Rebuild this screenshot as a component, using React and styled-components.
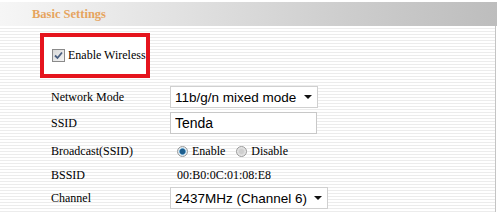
import styled, { createGlobalStyle } from "styled-components";

const GlobalStyle = createGlobalStyle`
  html, body {
    margin: 0;
    padding: 0;
    background: #fff;
  }
  body {
    font-family: "Liberation Serif", "Times New Roman", serif;
    font-size: 12px;
    color: #000;
  }
`;

const rows = [
  { label: "Network Mode", height: 26 },
  { label: "SSID", height: 26 },
  { label: "Broadcast(SSID)", height: 30 },
  { label: "BSSID", height: 18 },
  { label: "Channel", height: 28 },
];

export default function App() {
  return (
    <>
      <GlobalStyle />
      <Page>
        <HeaderBar>
          <h3>Basic Settings</h3>
        </HeaderBar>
        <Panel>
          <Highlight>
            <CheckBox>
              <svg width="9" height="9" viewBox="0 0 9 9">
                <path
                  d="M1 4.5 L3.5 7 L8 1.5"
                  fill="none"
                  stroke="#4a5f80"
                  strokeWidth="1.8"
                />
              </svg>
            </CheckBox>
            <span>Enable Wireless</span>
          </Highlight>

          <Form>
            <Row $h={rows[0].height}>
              <Label>{rows[0].label}</Label>
              <SelectBox $w={148}>
                <span>11b/g/n mixed mode</span>
                <Arrow />
              </SelectBox>
            </Row>
            <Row $h={rows[1].height}>
              <Label>{rows[1].label}</Label>
              <TextInput defaultValue="Tenda" />
            </Row>
            <Row $h={rows[2].height}>
              <Label>{rows[2].label}</Label>
              <Radios>
                <RadioItem>
                  <Radio $on />
                  Enable
                </RadioItem>
                <RadioItem>
                  <Radio />
                  Disable
                </RadioItem>
              </Radios>
            </Row>
            <Row $h={rows[3].height}>
              <Label>{rows[3].label}</Label>
              <Value>00:B0:0C:01:08:E8</Value>
            </Row>
            <Row $h={rows[4].height}>
              <Label>{rows[4].label}</Label>
              <SelectBox $w={158}>
                <span>2437MHz (Channel 6)</span>
                <Arrow />
              </SelectBox>
            </Row>
          </Form>
        </Panel>
      </Page>
    </>
  );
}

const Arrow = () => (
  <svg width="8" height="4" viewBox="0 0 8 4">
    <path d="M0 0 H8 L4 4 Z" fill="#111" />
  </svg>
);

const Page = styled.div`
  width: 497px;
  height: 212px;
  overflow: hidden;
  padding-top: 2px;
  box-sizing: border-box;
`;

const HeaderBar = styled.div`
  height: 24px;
  display: flex;
  align-items: center;
  padding-left: 32px;
  background: linear-gradient(to right, #f6f6f6 0%, #e2e2e2 35%, #cdcdcd 70%, #bdbdbd 100%);

  h3 {
    margin: 0;
    font-size: 12.5px;
    font-weight: 700;
    color: #e6a45e;
  }
`;

const Panel = styled.div`
  width: 496px;
  height: 186px;
  box-sizing: border-box;
  border-right: 1px solid #c4c4c4;
  padding-top: 7px;
  background: repeating-linear-gradient(
    to bottom,
    #ffffff 0px,
    #ffffff 2px,
    #ececec 2px,
    #ececec 3px
  );
`;

const Highlight = styled.div`
  margin-left: 40px;
  width: 110px;
  height: 45px;
  box-sizing: border-box;
  border: 4px solid #e5141d;
  background: #fff;
  display: flex;
  align-items: center;
  gap: 3px;
  padding-left: 8px;
  font-size: 12px;
  white-space: nowrap;
`;

const CheckBox = styled.span`
  flex: none;
  width: 11px;
  height: 11px;
  border: 1px solid #8a8a8a;
  background: linear-gradient(135deg, #d8d8d8, #f4f4f4);
  display: flex;
  align-items: center;
  justify-content: center;
`;

const Form = styled.div`
  margin-top: 6px;
  display: flex;
  flex-direction: column;
`;

const Row = styled.div`
  height: ${(p) => p.$h}px;
  display: flex;
  align-items: center;
`;

const Label = styled.div`
  flex: none;
  width: 119px;
  padding-left: 51px;
  font-size: 12px;
`;

const SelectBox = styled.div`
  flex: none;
  width: ${(p) => p.$w}px;
  height: 22px;
  box-sizing: border-box;
  border: 1px solid #d0d0d0;
  background: #fff;
  display: flex;
  align-items: center;
  justify-content: space-between;
  padding: 0 5px 0 4px;
  font-family: "Liberation Sans", Arial, sans-serif;
  font-size: 13.5px;
  color: #000;
  white-space: nowrap;

  svg {
    flex: none;
  }
`;

const TextInput = styled.input`
  width: 147px;
  height: 22px;
  box-sizing: border-box;
  border: 1px solid #c8c8c8;
  background: #fff;
  padding: 0 4px;
  margin: 0;
  font-family: "Liberation Sans", Arial, sans-serif;
  font-size: 14px;
  color: #000;
  outline: none;
`;

const Radios = styled.div`
  display: flex;
  align-items: center;
  gap: 11px;
  padding-left: 7px;
  font-size: 12px;
`;

const RadioItem = styled.label`
  display: flex;
  align-items: center;
  gap: 4px;
`;

const Radio = styled.span`
  width: 11px;
  height: 11px;
  border-radius: 50%;
  box-sizing: border-box;
  border: 1px solid #9a9a9a;
  background: ${(p) =>
    p.$on
      ? "radial-gradient(circle, #1f5f8e 0 2.5px, #5fa0cc 3px, #dfe9ef 3.6px)"
      : "radial-gradient(circle, #cfcfcf 0 2px, #e6e6e6 4px)"};
`;

const Value = styled.div`
  padding-left: 7px;
  font-size: 12px;
`;
